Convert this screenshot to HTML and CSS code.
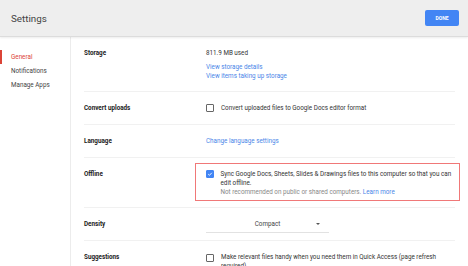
FILE: index.html
```html
<!DOCTYPE html>
<html lang="en">
<head>
  <meta charset="UTF-8" />
  <title>Settings</title>
  <link rel="stylesheet" href="styles.css">
</head>
<body>
  <header class="topbar">
    <div class="title">Settings</div>
    <button class="done">DONE</button>
  </header>

  <div class="layout">
    <nav class="sidebar">
      <a class="nav-item active">General</a>
      <a class="nav-item">Notifications</a>
      <a class="nav-item">Manage Apps</a>
    </nav>

    <main class="content">
      <div class="row row-storage">
        <div class="label">Storage</div>
        <div class="value">
          <div>811.9 MB used</div>
          <div class="links">
            <a class="link">View storage details</a>
            <a class="link">View items taking up storage</a>
          </div>
        </div>
      </div>

      <div class="row">
        <div class="label">Convert uploads</div>
        <div class="value check-row">
          <span class="checkbox"></span>
          <span>Convert uploaded files to Google Docs editor format</span>
        </div>
      </div>

      <div class="row">
        <div class="label">Language</div>
        <div class="value"><a class="link">Change language settings</a></div>
      </div>

      <div class="row row-offline">
        <div class="label">Offline</div>
        <div class="value">
          <div class="highlight check-row">
            <span class="checkbox checked">
              <svg viewBox="0 0 10 10" width="8" height="8"><path d="M2 5.2 L4.1 7.2 L8 3" fill="none" stroke="#fff" stroke-width="1.5"/></svg>
            </span>
            <div>
              <div>Sync Google Docs, Sheets, Slides &amp; Drawings files to this computer so that you can edit offline.</div>
              <div class="hint">Not recommended on public or shared computers. <a class="link">Learn more</a></div>
            </div>
          </div>
        </div>
      </div>

      <div class="row">
        <div class="label">Density</div>
        <div class="value">
          <div class="select">
            <span>Compact</span>
            <span class="arrow"></span>
          </div>
        </div>
      </div>

      <div class="row">
        <div class="label">Suggestions</div>
        <div class="value check-row">
          <span class="checkbox"></span>
          <span>Make relevant files handy when you need them in Quick Access (page refresh required)</span>
        </div>
      </div>
    </main>
  </div>
</body>
</html>
```

FILE: styles.css
```css
body {
  margin: 0;
  font-family: Roboto, "Liberation Sans", sans-serif;
  font-size: 6.3px;
  color: #333;
  background: #fff;
  overflow: hidden;
  height: 266px;
}
.topbar {
  height: 36px;
  background: #eeeeee;
  border-bottom: 1px solid #dcdcdc;
  box-shadow: 0 1px 2px rgba(0,0,0,0.08);
  display: flex;
  align-items: center;
  justify-content: space-between;
  padding: 0 9px 0 11px;
  position: relative;
}
.title {
  font-size: 9.8px;
  color: #444;
}
.done {
  width: 34px;
  height: 16px;
  margin-top: -0.5px;
  background: #4285f4;
  color: #fff;
  border: none;
  border-radius: 2px;
  font-family: Roboto, sans-serif;
  font-size: 5px;
  font-weight: 700;
  padding: 0;
}
.layout {
  display: flex;
}
.sidebar {
  width: 70px;
  border-right: 1px solid #ececec;
  padding-top: 13px;
  min-height: 240px;
  display: flex;
  flex-direction: column;
}
.nav-item {
  display: block;
  padding: 2.5px 11px;
  line-height: 9px;
  color: #444;
  border-left: 2px solid transparent;
  padding-left: 9px;
}
.nav-item.active {
  color: #db4437;
  border-left-color: #db4437;
}
.content {
  flex: 1;
  padding: 0 13px;
}
.row {
  display: grid;
  grid-template-columns: 122px 1fr;
  padding: 12px 0 11px;
  line-height: 9px;
  border-bottom: 1px solid #f1f1f1;
}
.row-storage {
  padding-bottom: 10px;
}
.label {
  font-weight: 700;
  color: #222;
}
.links {
  margin-top: 4.5px;
}
.link {
  display: block;
  color: #4a86e8;
}
.hint .link {
  display: inline;
}
.check-row {
  display: flex;
  align-items: flex-start;
  gap: 7px;
}
.checkbox {
  flex: none;
  width: 6px;
  height: 6px;
  margin-top: 0.5px;
  border: 1.2px solid #666;
  border-radius: 1px;
  display: flex;
  align-items: center;
  justify-content: center;
}
.checkbox.checked {
  background: #4285f4;
  border-color: #4285f4;
}
.row-offline {
  padding: 5px 0 6px;
}
.row-offline .label {
  padding-top: 7.5px;
}
.highlight {
  margin: 0 -5px 0 -11px;
  border: 1.5px solid #f07878;
  padding: 6px 5px 4.5px 9.5px;
}
.hint {
  color: #888;
  line-height: 8px;
}
.select {
  width: 123px;
  padding-bottom: 3px;
  margin-bottom: -4px;
  border-bottom: 1px solid #e2e2e2;
  display: flex;
  justify-content: center;
  position: relative;
  color: #444;
}
.arrow {
  position: absolute;
  right: 9px;
  top: 3px;
  border-left: 2.5px solid transparent;
  border-right: 2.5px solid transparent;
  border-top: 2.5px solid #555;
}
```
